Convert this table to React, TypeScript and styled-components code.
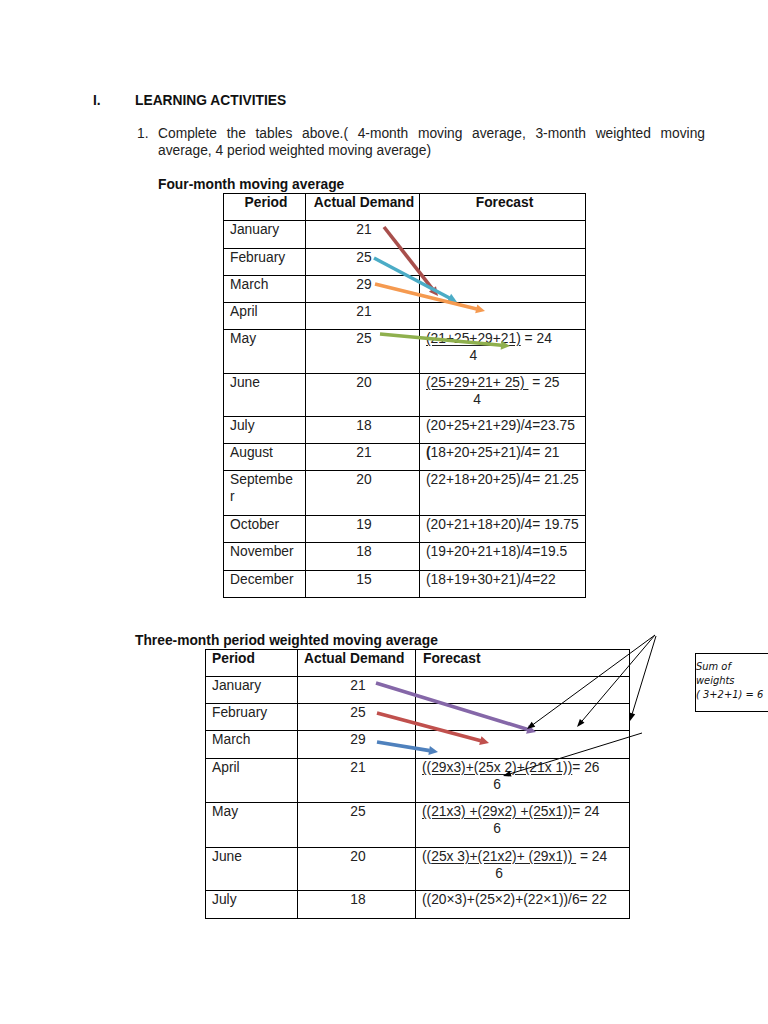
import React from "react";
import styled, { createGlobalStyle } from "styled-components";

const Global = createGlobalStyle`
  html, body { margin: 0; padding: 0; background: #ffffff; }
  body { font-family: "Liberation Sans", Arial, sans-serif; color: #222; }
`;

const Page = styled.div`
  position: relative;
  width: 768px;
  min-height: 1024px;
  padding-top: 92px;
  box-sizing: border-box;
  font-size: 13.8px;
  line-height: 17px;
`;

const Heading = styled.div`
  display: flex;
  padding-left: 93px;
  font-weight: bold;
  color: #111;
`;

const Numeral = styled.span`
  width: 42px;
`;

const Item = styled.div`
  display: flex;
  margin-top: 16px;
  padding-left: 137px;
`;

const ItemNum = styled.span`
  width: 21px;
  flex: none;
`;

const ItemText = styled.p`
  margin: 0;
  width: 547px;
  text-align: justify;
  text-align-last: left;
`;

const Caption = styled.div<{ $indent: number; $top: number }>`
  margin-top: ${(p) => p.$top}px;
  padding-left: ${(p) => p.$indent}px;
  font-weight: bold;
  color: #111;
`;

const Table = styled.table<{ $left: number; $width: number }>`
  margin-left: ${(p) => p.$left}px;
  width: ${(p) => p.$width}px;
  border-collapse: collapse;
  table-layout: fixed;
  font-size: 13.8px;
  line-height: 17px;
`;

const Cell = styled.td<{ $align?: string; $h: number; $bold?: boolean; $padLeft?: number }>`
  border: 1px solid #000;
  height: ${(p) => p.$h}px;
  box-sizing: border-box;
  padding: 0 3px 0 ${(p) => p.$padLeft ?? 6}px;
  vertical-align: top;
  text-align: ${(p) => p.$align ?? "left"};
  font-weight: ${(p) => (p.$bold ? "bold" : "normal")};
  color: ${(p) => (p.$bold ? "#111" : "#222")};
  white-space: nowrap;
`;

const Frac = styled.span`
  display: inline-flex;
  flex-direction: column;
  align-items: center;
  vertical-align: top;
`;

const Num = styled.span`
  text-decoration: underline;
  text-underline-offset: 2px;
  white-space: pre;
`;

const Under = styled.span`
  text-decoration: underline;
  text-underline-offset: 2px;
  white-space: pre;
`;

const Overlay = styled.svg`
  position: absolute;
  left: 0;
  top: 0;
  pointer-events: none;
`;

const NoteBox = styled.div`
  position: absolute;
  left: 695px;
  top: 653px;
  width: 90px;
  height: 59px;
  border: 1px solid #000;
  box-sizing: border-box;
  padding-top: 6px;
  font-family: "Liberation Sans Narrow", "DejaVu Sans Condensed", "Liberation Sans", sans-serif;
  font-style: italic;
  font-size: 11px;
  line-height: 14px;
  color: #111;
  background: #fff;
`;

type Row = { p: React.ReactNode; d: string; f?: React.ReactNode; h: number };

const t1Rows: Row[] = [
  { p: "January", d: "21", h: 28 },
  { p: "February", d: "25", h: 27 },
  { p: "March", d: "29", h: 27 },
  { p: "April", d: "21", h: 27 },
  {
    p: "May",
    d: "25",
    h: 44,
    f: (
      <>
        <Frac>
          <Num>(21+25+29+21)</Num>
          <span>4</span>
        </Frac>
        {" = 24"}
      </>
    ),
  },
  {
    p: "June",
    d: "20",
    h: 43,
    f: (
      <>
        <Frac>
          <Num>(25+29+21+ 25) </Num>
          <span>4</span>
        </Frac>
        {"  = 25"}
      </>
    ),
  },
  { p: "July", d: "18", h: 27, f: "(20+25+21+29)/4=23.75" },
  {
    p: "August",
    d: "21",
    h: 27,
    f: (
      <>
        <b>(</b>18+20+25+21)/4= 21
      </>
    ),
  },
  {
    p: (
      <>
        Septembe
        <br />r
      </>
    ),
    d: "20",
    h: 45,
    f: "(22+18+20+25)/4= 21.25",
  },
  { p: "October", d: "19", h: 27, f: "(20+21+18+20)/4= 19.75" },
  { p: "November", d: "18", h: 28, f: "(19+20+21+18)/4=19.5" },
  { p: "December", d: "15", h: 27, f: "(18+19+30+21)/4=22" },
];

const t2Rows: Row[] = [
  { p: "January", d: "21", h: 27 },
  { p: "February", d: "25", h: 27 },
  { p: "March", d: "29", h: 28 },
  {
    p: "April",
    d: "21",
    h: 44,
    f: (
      <>
        <Frac>
          <Num>((29x3)+(25x 2)+(21x 1))</Num>
          <span>6</span>
        </Frac>
        = 26
      </>
    ),
  },
  {
    p: "May",
    d: "25",
    h: 45,
    f: (
      <>
        <Frac>
          <Num>((21x3) +(29x2) +(25x1))</Num>
          <span>6</span>
        </Frac>
        = 24
      </>
    ),
  },
  {
    p: "June",
    d: "20",
    h: 43,
    f: (
      <>
        <Frac>
          <span>
            ((<Under>25x 3)+(21x2)+ (29x1)) </Under>
          </span>
          <span>6</span>
        </Frac>
        {" = 24"}
      </>
    ),
  },
  { p: "July", d: "18", h: 28, f: "((20×3)+(25×2)+(22×1))/6= 22" },
];

type Arrow = { x1: number; y1: number; x2: number; y2: number; c: string; w: number; hl: number; hw: number };

function ArrowShape({ a }: { a: Arrow }) {
  const dx = a.x2 - a.x1;
  const dy = a.y2 - a.y1;
  const d = Math.hypot(dx, dy);
  const ux = dx / d;
  const uy = dy / d;
  const bx = a.x2 - ux * a.hl;
  const by = a.y2 - uy * a.hl;
  const px = -uy * (a.hw / 2);
  const py = ux * (a.hw / 2);
  const pts = `${a.x2},${a.y2} ${bx + px},${by + py} ${bx - px},${by - py}`;
  return (
    <g>
      <line x1={a.x1} y1={a.y1} x2={bx + ux * 0.5} y2={by + uy * 0.5} stroke={a.c} strokeWidth={a.w} strokeLinecap="butt" />
      <polygon points={pts} fill={a.c} />
    </g>
  );
}

const thick = (x1: number, y1: number, x2: number, y2: number, c: string): Arrow => ({ x1, y1, x2, y2, c, w: 3.6, hl: 9, hw: 9 });
const thin = (x1: number, y1: number, x2: number, y2: number): Arrow => ({ x1, y1, x2, y2, c: "#000", w: 1, hl: 8, hw: 6 });

const arrows: Arrow[] = [
  thick(384, 227, 438, 296, "#a84f4c"),
  thick(374, 258, 457, 302, "#4bacc6"),
  thick(375, 284, 485, 311, "#f59a50"),
  thick(380, 334, 510, 346, "#8fb04e"),
  thick(376, 683, 536, 732, "#8567a8"),
  thick(377, 713, 489, 743, "#c0504d"),
  thick(377, 742, 438, 752, "#4f81bd"),
  thin(655, 635, 527, 729),
  thin(655, 635, 577, 727),
  thin(656, 636, 630, 721),
  thin(642, 733, 503, 776),
];

function DataTable({
  rows,
  left,
  widths,
  centerHeader,
  headerH,
}: {
  rows: Row[];
  left: number;
  widths: number[];
  centerHeader: boolean;
  headerH: number;
}) {
  const total = widths.reduce((s, v) => s + v, 0);
  const hAlign = centerHeader ? "center" : "left";
  return (
    <Table $left={left} $width={total}>
      <colgroup>
        {widths.map((w, i) => (
          <col key={i} style={{ width: w }} />
        ))}
      </colgroup>
      <thead>
        <tr>
          <Cell as="th" $h={headerH} $bold $align={hAlign}>
            Period
          </Cell>
          <Cell as="th" $h={headerH} $bold $align={hAlign}>
            Actual Demand
          </Cell>
          <Cell as="th" $h={headerH} $bold $align={hAlign} $padLeft={7}>
            Forecast
          </Cell>
        </tr>
      </thead>
      <tbody>
        {rows.map((r, i) => (
          <tr key={i}>
            <Cell $h={r.h}>{r.p}</Cell>
            <Cell $h={r.h} $align="center">
              {r.d}
            </Cell>
            <Cell $h={r.h} $padLeft={6}>
              {r.f}
            </Cell>
          </tr>
        ))}
      </tbody>
    </Table>
  );
}

export default function App() {
  return (
    <>
      <Global />
      <Page>
        <Heading>
          <Numeral>I.</Numeral>
          <span>LEARNING ACTIVITIES</span>
        </Heading>
        <Item>
          <ItemNum>1.</ItemNum>
          <ItemText>
            Complete the tables above.( 4-month moving average, 3-month weighted moving average, 4 period weighted
            moving average)
          </ItemText>
        </Item>
        <Caption $indent={158} $top={17}>
          Four-month moving average
        </Caption>
        <DataTable rows={t1Rows} left={223} widths={[82, 114, 166]} centerHeader headerH={27} />
        <Caption $indent={135} $top={34}>
          Three-month period weighted moving average
        </Caption>
        <DataTable rows={t2Rows} left={205} widths={[92, 118, 214]} centerHeader={false} headerH={27} />
        <NoteBox>
          Sum of
          <br />
          weights
          <br />( 3+2+1) = 6
        </NoteBox>
        <Overlay width={768} height={1024} viewBox="0 0 768 1024">
          {arrows.map((a, i) => (
            <ArrowShape key={i} a={a} />
          ))}
        </Overlay>
      </Page>
    </>
  );
}
